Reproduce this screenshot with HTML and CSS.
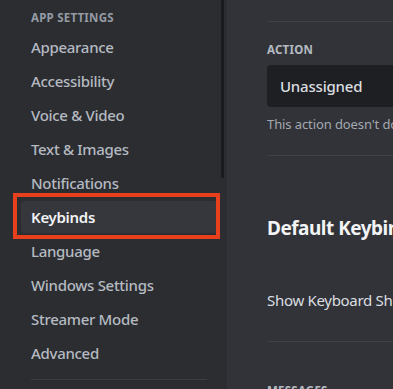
FILE: index.html
```html
<!DOCTYPE html>
<html>
<head>
<meta charset="utf-8">
<link rel="stylesheet" href="styles.css">
</head>
<body>
<div class="app">
  <aside class="sidebar">
    <nav class="nav">
      <div class="nav-header">App Settings</div>
      <div class="nav-item">Appearance</div>
      <div class="nav-item">Accessibility</div>
      <div class="nav-item">Voice &amp; Video</div>
      <div class="nav-item">Text &amp; Images</div>
      <div class="nav-item">Notifications</div>
      <div class="nav-item selected">Keybinds<span class="highlight"></span></div>
      <div class="nav-item">Language</div>
      <div class="nav-item">Windows Settings</div>
      <div class="nav-item">Streamer Mode</div>
      <div class="nav-item">Advanced</div>
      <div class="nav-sep"></div>
    </nav>
    <div class="scrolltrack"><div class="thumb"></div></div>
  </aside>
  <main class="content">
    <div class="sep top-sep"></div>
    <div class="label">Action</div>
    <div class="input">Unassigned</div>
    <div class="help">This action doesn't do anything</div>
    <div class="sep"></div>
    <h2 class="heading">Default Keybinds</h2>
    <div class="row">Show Keyboard Shortcuts</div>
    <div class="sep"></div>
    <div class="label messages">Messages</div>
  </main>
</div>
</body>
</html>
```
FILE: styles.css
```css
html, body {
  margin: 0;
  padding: 0;
  height: 100%;
  overflow: hidden;
  background: #313338;
  font-family: "Noto Sans", "Open Sans", sans-serif;
}
.app {
  display: flex;
  height: 389px;
  overflow: hidden;
}
.sidebar {
  width: 227px;
  flex: none;
  display: flex;
  background: #2b2d31;
}
.nav {
  flex: 1;
  padding-left: 21px;
  padding-right: 4px;
}
.nav-header {
  margin-top: 10px;
  margin-bottom: 5px;
  padding-left: 10px;
  height: 16px;
  line-height: 16px;
  font-size: 11.5px;
  font-weight: 700;
  letter-spacing: 0.02em;
  text-transform: uppercase;
  color: #949ba4;
}
.nav-item {
  position: relative;
  height: 32px;
  line-height: 32px;
  margin-bottom: 2px;
  padding-left: 10px;
  border-radius: 4px;
  font-size: 15px;
  font-weight: 500;
  letter-spacing: -0.3px;
  color: #b5bac1;
  white-space: nowrap;
}
.nav-item.selected {
  background: #35373c;
  color: #f2f3f5;
  font-weight: 600;
}
.highlight {
  position: absolute;
  left: -8px;
  right: -3px;
  top: -8px;
  bottom: -6px;
  border: 4px solid #e8401c;
}
.nav-sep {
  margin: 10px 0 0 10px;
  width: 176px;
  height: 1px;
  background: #3b3d42;
}
.scrolltrack {
  width: 6px;
  flex: none;
  background: #2b2d31;
}
.thumb {
  width: 3px;
  height: 178px;
  background: #1a1b1e;
  border-radius: 0 0 3px 3px;
}
.content {
  flex: 1;
  padding-left: 40px;
  white-space: nowrap;
  overflow: hidden;
}
.sep {
  height: 1px;
  background: #3f4147;
}
.top-sep {
  margin-top: 21px;
}
.label {
  margin-top: 20px;
  height: 16px;
  line-height: 16px;
  font-size: 11.5px;
  font-weight: 700;
  letter-spacing: 0.02em;
  text-transform: uppercase;
  color: #b5bac1;
}
.input {
  margin-top: 7px;
  height: 42px;
  line-height: 42px;
  padding-left: 13px;
  border-radius: 4px 0 0 4px;
  background: #1e1f22;
  font-size: 15px;
  font-weight: 500;
  letter-spacing: -0.2px;
  color: #dbdee1;
}
.help {
  margin-top: 8px;
  height: 18px;
  line-height: 18px;
  font-size: 13px;
  letter-spacing: -0.1px;
  color: #a3a8b0;
  margin-bottom: 22px;
}
.heading {
  margin: 60px 0 0;
  height: 24px;
  line-height: 24px;
  font-size: 19px;
  font-weight: 700;
  letter-spacing: -0.5px;
  color: #f2f3f5;
}
.row {
  margin-top: 50px;
  height: 20px;
  line-height: 20px;
  font-size: 15px;
  letter-spacing: -0.3px;
  color: #dbdee1;
  margin-bottom: 31px;
}
.messages {
  margin-top: 41px;
}
```
